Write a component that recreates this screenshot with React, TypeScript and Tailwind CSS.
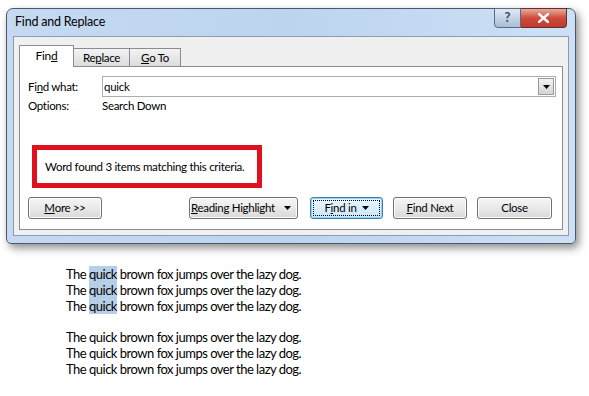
import React from "react";

const ui = { fontFamily: 'Lato, "Open Sans", sans-serif' };

function Btn({ children, className = "", focused = false }: { children: React.ReactNode; className?: string; focused?: boolean }) {
  if (focused) {
    return (
      <div className={`h-[22px] whitespace-nowrap rounded-[3px] border border-[#3c7fb1] bg-gradient-to-b from-[#eaf6fd] to-[#c9e6f8] p-[2px] shadow-[inset_0_0_0_1px_#8fd3f4] ${className}`}>
        <div className="flex h-full items-center justify-center border border-dotted border-black">{children}</div>
      </div>
    );
  }
  return (
    <div className={`flex h-[22px] items-center justify-center whitespace-nowrap rounded-[3px] border border-[#707070] bg-gradient-to-b from-[#f6f6f6] via-[#e9e9e9] to-[#d9d9d9] shadow-[inset_0_0_0_1px_#fcfcfc] ${className}`}>
      {children}
    </div>
  );
}

const Arrow = () => (
  <svg width="7" height="4" viewBox="0 0 7 4" className="inline-block">
    <path d="M0 0 L7 0 L3.5 4 Z" fill="#000" />
  </svg>
);

export default function App() {
  const line = "brown fox jumps over the lazy dog.";
  return (
    <div className="relative h-[396px] w-[589px] overflow-hidden bg-white text-[11.5px] tracking-[-0.3px] text-black" style={ui}>
      {/* Window */}
      <div className="ml-[6px] mt-[8px] flex h-[236px] w-[570px] flex-col rounded-t-[7px] rounded-b-[5px] border border-[#4a5868] bg-gradient-to-r from-[#c5daf1] via-[#bcd4ee] to-[#cde1f6] shadow-[3px_4px_8px_rgba(0,0,0,0.45)]">
        {/* Title bar */}
        <div className="relative flex h-[27px] shrink-0 items-center pl-[8px] text-[12.5px] tracking-[-0.2px] text-black">
          <span className="mt-[-1px]">Find and Replace</span>
          <div className="absolute right-[8px] top-[-1px] flex h-[20px]">
            <div className="flex w-[27px] items-center justify-center rounded-bl-[4px] border border-[#5a6b80] bg-gradient-to-b from-[#dde8f3] via-[#c4d4e6] to-[#a9bdd4] text-[13px] font-bold text-[#3a4a60]">?</div>
            <div className="flex w-[46px] items-center justify-center rounded-br-[4px] border border-l-0 border-[#5a3030] bg-gradient-to-b from-[#e8a99c] via-[#cc4b3b] to-[#c23a2c]">
              <svg width="11" height="10" viewBox="0 0 11 10">
                <path d="M1 1 L10 9 M10 1 L1 9" stroke="#fff" strokeWidth="2.4" strokeLinecap="square" />
              </svg>
            </div>
          </div>
        </div>
        {/* Client */}
        <div className="mx-[6px] mb-[7px] flex flex-1 flex-col border border-[#8c9cb0] bg-[#f0f0f0] px-[5px] pb-[5px] pt-[8px]">
          {/* Tabs */}
          <div className="relative z-10 flex h-[22px] items-end">
            <div className="flex h-[22px] w-[55px] items-center justify-center border border-b-0 border-[#898c95] bg-white pb-[1px] text-[12px]">
              Fin<span className="underline">d</span>
            </div>
            <div className="flex h-[19px] w-[56px] items-center justify-center border border-l-0 border-[#898c95] bg-gradient-to-b from-[#f3f3f3] to-[#dcdcdc]">
              Re<span className="underline">p</span>lace
            </div>
            <div className="flex h-[19px] w-[51px] items-center justify-center border border-l-0 border-[#898c95] bg-gradient-to-b from-[#f3f3f3] to-[#dcdcdc]">
              <span className="underline">G</span>o To
            </div>
          </div>
          {/* Panel */}
          <div className="-mt-[1px] flex flex-1 flex-col border border-[#898c95] bg-white pl-[8px] pr-[6px] pt-[9px]">
            <div className="flex h-[21px] items-center">
              <div className="w-[74px]">
                Fi<span className="underline">n</span>d what:
              </div>
              <div className="flex h-[21px] flex-1 items-center border border-[#abadb3] bg-white pl-[1px] pr-[1px]">
                <span className="flex-1">quick</span>
                <div className="flex h-[17px] w-[16px] items-center justify-center border border-[#9a9a9a] bg-gradient-to-b from-[#f2f2f2] to-[#d4d4d4]">
                  <Arrow />
                </div>
              </div>
            </div>
            <div className="mt-[-1px] flex h-[20px] items-center">
              <div className="w-[74px]">Options:</div>
              <div>Search Down</div>
            </div>
            <div className="ml-[4px] mt-[29px] flex h-[43px] w-[230px] items-center whitespace-nowrap border-[5px] border-[#e0101e] pl-[8px]">
              Word found 3 items matching this criteria.
            </div>
            <div className="mt-[9px] flex items-center">
              <Btn className="w-[74px]">
                <span className="underline">M</span>ore &gt;&gt;
              </Btn>
              <Btn className="ml-[87px] w-[109px] !justify-between pl-[1px] pr-[6px]">
                <span>
                  <span className="underline">R</span>eading Highlight
                </span>
                <Arrow />
              </Btn>
              <Btn focused className="ml-[12px] w-[73px]">
                <span className="mr-[5px]">
                  F<span className="underline">i</span>nd in
                </span>
                <Arrow />
              </Btn>
              <Btn className="ml-[10px] w-[74px]">
                <span className="underline">F</span>ind Next
              </Btn>
              <Btn className="ml-[10px] w-[75px]">Close</Btn>
            </div>
          </div>
        </div>
      </div>

      {/* Document text */}
      <div className="ml-[66px] mt-[22px] text-[13px] leading-[16px] tracking-[-0.5px] text-black" style={{ fontFamily: 'Lato, "Open Sans", sans-serif' }}>
        {[0, 1, 2].map((i) => (
          <div key={i} className="h-[16px] whitespace-nowrap">
            The <span className="inline-block h-[16px] bg-[#b6cfe9]">quick</span> {line}
          </div>
        ))}
        <div className="h-[15px]" />
        {[0, 1, 2].map((i) => (
          <div key={i} className="h-[16px] whitespace-nowrap">
            The quick {line}
          </div>
        ))}
      </div>
    </div>
  );
}
